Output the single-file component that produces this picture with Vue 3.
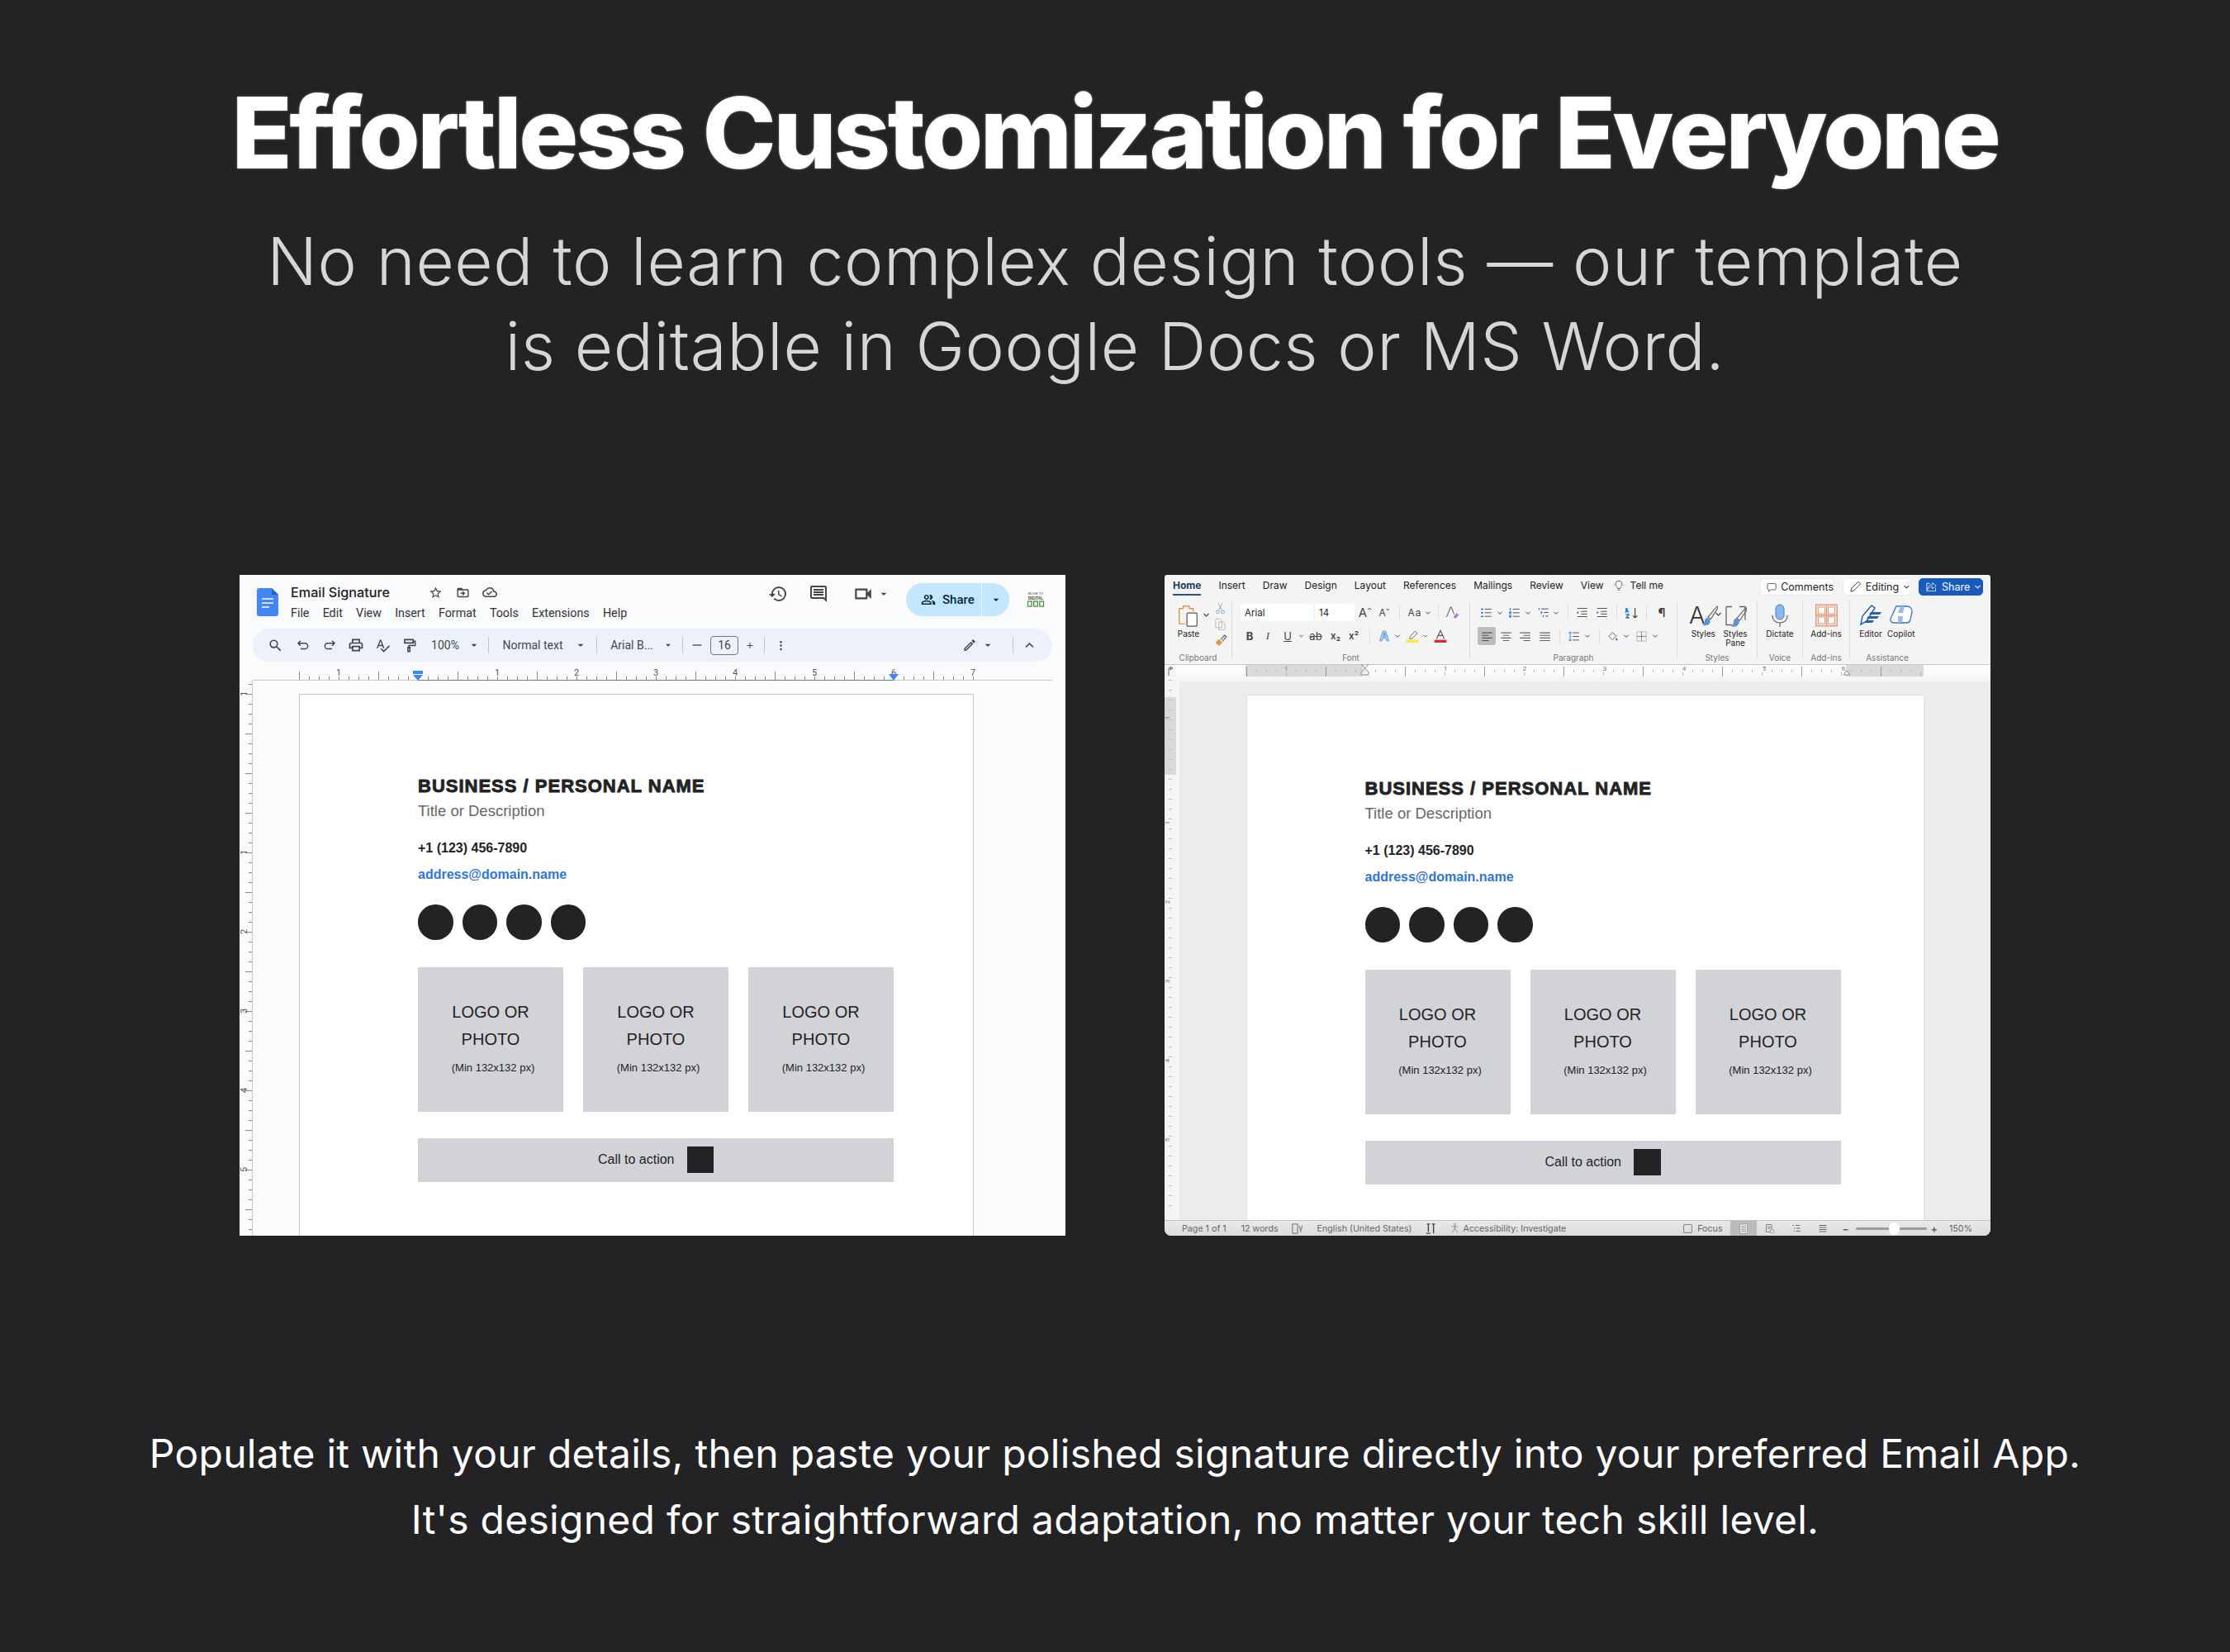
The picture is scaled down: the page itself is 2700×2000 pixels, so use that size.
<template>
  <div class="page">
    <header class="intro">
      <h1>Effortless Customization for Everyone</h1>
      <p>No need to learn complex design tools — our template<br />is editable in Google Docs or MS Word.</p>
    </header>

    <section class="windows">
      <!-- google docs -->
      <div class="docs">
        <div class="d-head">
          <svg class="d-logo" width="26" height="34" viewBox="0 0 26 34">
            <path fill="#4285f4" d="M3 0h15l8 8v23a3 3 0 0 1-3 3H3a3 3 0 0 1-3-3V3a3 3 0 0 1 3-3z" />
            <path fill="#2a5fc4" d="M18 0l8 8h-8z" />
            <path stroke="#fff" stroke-width="1.7" d="M6 13h14M6 18h14M6 23h9" />
          </svg>
          <div class="d-titles">
            <div class="d-name">
              <span class="d-file">Email Signature</span>
              <svg class="d-star" width="17" height="17" viewBox="0 0 24 24" v-html="icons.star"></svg>
              <svg class="d-move" width="17" height="17" viewBox="0 0 24 24" v-html="icons.folder"></svg>
              <svg class="d-cloud" width="18" height="18" viewBox="0 0 24 24" v-html="icons.cloud"></svg>
            </div>
            <nav class="d-menu">
              <span v-for="m in docsMenu" :key="m">{{ m }}</span>
            </nav>
          </div>
          <div class="d-actions">
            <svg class="d-hist" width="24" height="24" viewBox="0 0 24 24" v-html="icons.history"></svg>
            <svg class="d-comment" width="24" height="24" viewBox="0 0 24 24" v-html="icons.comment"></svg>
            <svg class="d-cam" width="26" height="26" viewBox="0 0 24 24" v-html="icons.video"></svg>
            <svg class="d-arrow" width="16" height="16" viewBox="0 0 24 24" v-html="icons.drop"></svg>
            <div class="d-share">
              <div class="d-share-main">
                <svg width="18" height="18" viewBox="0 0 24 24" v-html="icons.people"></svg>
                <span>Share</span>
              </div>
              <div class="d-share-more">
                <svg width="16" height="16" viewBox="0 0 24 24" v-html="icons.drop"></svg>
              </div>
            </div>
            <svg class="d-avatar" width="24" height="24" viewBox="0 0 24 24">
              <circle cx="12" cy="12" r="12" fill="#fff" />
              <text x="12" y="6.4" text-anchor="middle" class="av-text">MOVE TO</text>
              <text x="12" y="11.6" text-anchor="middle" class="av-text av-bold">DIGITAL</text>
              <g fill="none" stroke="#4c8f3c" stroke-width="1.3">
                <rect x="2.5" y="14" width="4.6" height="6" />
                <rect x="9.7" y="14" width="4.6" height="6" />
                <rect x="16.9" y="14" width="4.6" height="6" />
              </g>
            </svg>
          </div>
        </div>

        <div class="d-bar">
          <template v-for="(c, i) in docsTools" :key="i">
            <span class="d-cell" :style="{ width: c.w + 'px' }">
              <svg v-if="c.i" :width="c.s" :height="c.s" viewBox="0 0 24 24" v-html="icons[c.i]"></svg>
              <i v-else-if="c.sep" class="d-sep"></i>
              <b v-else-if="c.box" class="d-size">{{ c.box }}</b>
              <template v-else>{{ c.t }}</template>
            </span>
          </template>
        </div>

        <svg class="d-ruler" width="1000" height="23" viewBox="0 0 1000 23">
          <path stroke="#c7c7c7" d="M16 22.5h968" />
          <path stroke="#777" d="M216 22.5h576" />
          <path v-for="x in docsTicks" :key="x" stroke="#888" :d="`M${x + 0.5} 22V${(x - 216 + 960) % 96 === 48 ? 12 : 18}`" />
          <text v-for="n in docsNums" :key="n.x" :x="n.x" y="17" text-anchor="middle" class="r-num">{{ n.t }}</text>
          <rect x="210" y="11" width="12" height="4" fill="#4285f4" />
          <path d="M210 16h12l-6 7z" fill="#4285f4" />
          <path d="M786 15h12l-6 8z" fill="#4285f4" />
        </svg>

        <div class="d-body">
          <svg class="d-vruler" width="16" height="672" viewBox="0 0 16 672">
            <path stroke="#c7c7c7" d="M15.5 0v672" />
            <path v-for="y in vTicks" :key="y" stroke="#888" :d="`M15 ${y + 0.5}H${(y - 16) % 48 === 0 ? 7 : 11}`" />
            <text v-for="n in vNums" :key="n.y" x="0" y="0" text-anchor="middle" class="r-num" :transform="`translate(9 ${n.y}) rotate(-90)`">{{ n.t }}</text>
          </svg>
          <div class="d-canvas">
            <div class="sheet docs-sheet">
              <div class="s-name">BUSINESS / PERSONAL NAME</div>
              <div class="s-title">Title or Description</div>
              <div class="s-phone">+1 (123) 456-7890</div>
              <div class="s-mail">address@domain.name</div>
              <div class="s-dots"><i v-for="n in 4" :key="n"></i></div>
              <div class="s-boxes">
                <div v-for="n in 3" :key="n" class="s-box">
                  <span>LOGO OR</span>
                  <span>PHOTO</span>
                  <small>(Min 132x132 px)</small>
                </div>
              </div>
              <div class="s-cta">Call to action <i></i></div>
            </div>
          </div>
        </div>
      </div>

      <!-- word -->
      <div class="word">
        <div class="w-top">
          <nav class="w-tabs">
            <span v-for="t in wordTabs" :key="t" :class="{ on: t === 'Home' }">{{ t }}</span>
            <svg width="14" height="16" viewBox="0 0 24 24" v-html="icons.bulb"></svg>
            <span>Tell me</span>
          </nav>
          <div class="w-btn w-comments">
            <svg width="16" height="16" viewBox="0 0 24 24" v-html="icons.bubble"></svg>Comments
          </div>
          <div class="w-btn w-editing">
            <svg width="15" height="15" viewBox="0 0 24 24" v-html="icons.wpen"></svg>Editing
            <svg width="9" height="9" viewBox="0 0 24 24" v-html="icons.chev"></svg>
          </div>
          <div class="w-btn w-share">
            <svg width="15" height="15" viewBox="0 0 24 24" v-html="icons.wshare"></svg>Share
            <svg width="9" height="9" viewBox="0 0 24 24" v-html="icons.chevw"></svg>
          </div>
        </div>

        <div class="w-ribbon">
          <div class="rg rg-clip">
            <div class="clip-body">
              <div class="big">
                <svg width="28" height="30" viewBox="0 0 28 30" v-html="icons.paste"></svg>
                <span>Paste</span>
              </div>
              <svg class="clip-chev" width="9" height="9" viewBox="0 0 24 24" v-html="icons.chev"></svg>
              <div class="clip-side">
                <svg width="15" height="15" viewBox="0 0 24 24" v-html="icons.cut"></svg>
                <svg width="15" height="15" viewBox="0 0 24 24" v-html="icons.copy"></svg>
                <svg width="16" height="16" viewBox="0 0 24 24" v-html="icons.brush"></svg>
              </div>
            </div>
            <label>Clipboard</label>
          </div>

          <div v-for="g in textGroups" :key="g.name" class="rg" :class="g.cl">
            <div v-for="(row, r) in g.rows" :key="r" class="rrow">
              <span v-for="(c, i) in row" :key="i" class="rc" :class="c.cl" :style="{ width: c.w + 'px' }">
                <svg v-if="c.i" :width="c.s || 15" :height="c.s || 15" viewBox="0 0 24 24" v-html="icons[c.i]"></svg>
                <i v-else-if="c.sep" class="r-sep"></i>
                <template v-else>{{ c.t }}</template>
              </span>
            </div>
            <label>{{ g.name }}</label>
          </div>

          <div class="rg rg-styles">
            <div class="big-row">
              <div class="big b-styles">
                <div class="styles-a">
                  <span>A</span>
                  <svg width="20" height="26" viewBox="0 0 20 26" v-html="icons.stylebrush"></svg>
                </div>
                <span>Styles</span>
              </div>
              <svg class="st-chev" width="9" height="9" viewBox="0 0 24 24" v-html="icons.chev"></svg>
              <div class="big b-pane">
                <svg width="27" height="27" viewBox="0 0 27 27" v-html="icons.pane"></svg>
                <span>Styles<br />Pane</span>
              </div>
            </div>
            <label>Styles</label>
          </div>
          <div class="rg rg-voice">
            <div class="big">
              <svg width="20" height="28" viewBox="0 0 20 28" v-html="icons.mic"></svg>
              <span>Dictate</span>
            </div>
            <label>Voice</label>
          </div>
          <div class="rg rg-add">
            <div class="big">
              <svg width="27" height="27" viewBox="0 0 27 27" v-html="icons.addins"></svg>
              <span>Add-ins</span>
            </div>
            <label>Add-ins</label>
          </div>
          <div class="rg rg-assist">
            <div class="big-row assist-row">
              <div class="big">
                <svg width="28" height="28" viewBox="0 0 28 28" v-html="icons.editor"></svg>
                <span>Editor</span>
              </div>
              <div class="big">
                <svg width="30" height="28" viewBox="0 0 30 28" v-html="icons.copilot"></svg>
                <span>Copilot</span>
              </div>
            </div>
            <label>Assistance</label>
          </div>
        </div>

        <svg class="w-ruler" width="1000" height="15" viewBox="0 0 1000 15">
          <rect width="1000" height="15" fill="#fbfbfb" />
          <rect width="14" height="15" fill="#f5f5f5" />
          <path d="M5 14V5h3M7 3l3 2-3 2z" fill="none" stroke="#666" />
          <rect x="98" width="142" height="15" fill="#d9d9d9" />
          <rect x="825" width="94" height="15" fill="#d9d9d9" />
          <path stroke="#c9c9c9" d="M0 .5h1000" />
          <path v-for="t in wordTicks" :key="t.x" :stroke="t.tall ? '#999' : '#b5b5b5'" :d="`M${t.x + 0.5} ${t.tall ? 3 : t.inch ? 10 : 7}V${t.tall ? 15 : t.inch ? 14 : 10}`" />
          <text v-for="n in wordNums" :key="n.x" :x="n.x" y="8" text-anchor="middle" class="r-num r-small">{{ n.t }}</text>
          <path d="M238 0h9l-4.5 5 4.5 5v3h-9v-3l4.5-5z" fill="#f5f5f5" stroke="#888" />
          <path d="M822 13l4-5 4 5z" fill="#f5f5f5" stroke="#888" />
        </svg>

        <div class="w-body">
          <svg class="w-vruler" width="18" height="658" viewBox="0 0 18 658">
            <rect y="25" width="14" height="94" fill="#d9d9d9" />
            <path v-for="y in wordVTicks" :key="y" stroke="#bbb" :d="`M5 ${y + 0.5}H9`" />
            <text v-for="n in wordVNums" :key="n.y" class="r-num r-small" text-anchor="middle" :transform="`translate(6 ${n.y}) rotate(-90)`">{{ n.t }}</text>
          </svg>
          <div class="w-canvas">
            <div class="sheet word-sheet">
              <div class="s-name">BUSINESS / PERSONAL NAME</div>
              <div class="s-title">Title or Description</div>
              <div class="s-phone">+1 (123) 456-7890</div>
              <div class="s-mail">address@domain.name</div>
              <div class="s-dots"><i v-for="n in 4" :key="n"></i></div>
              <div class="s-boxes">
                <div v-for="n in 3" :key="n" class="s-box">
                  <span>LOGO OR</span>
                  <span>PHOTO</span>
                  <small>(Min 132x132 px)</small>
                </div>
              </div>
              <div class="s-cta">Call to action <i></i></div>
            </div>
          </div>
        </div>

        <div class="w-status">
          <span class="st-page">Page 1 of 1</span>
          <span class="st-words">12 words</span>
          <svg class="st-proof" width="15" height="15" viewBox="0 0 24 24" v-html="icons.proof"></svg>
          <span class="st-lang">English (United States)</span>
          <svg class="st-track" width="15" height="15" viewBox="0 0 24 24" v-html="icons.track"></svg>
          <svg class="st-acc" width="13" height="14" viewBox="0 0 24 24" v-html="icons.access"></svg>
          <span>Accessibility: Investigate</span>
          <svg class="st-focus" width="13" height="13" viewBox="0 0 24 24" v-html="icons.focus"></svg>
          <span>Focus</span>
          <div class="st-view on"><svg width="12" height="13" viewBox="0 0 24 24" v-html="icons.lines"></svg></div>
          <div class="st-view"><svg width="12" height="13" viewBox="0 0 24 24" v-html="icons.web"></svg></div>
          <div class="st-view"><svg width="12" height="13" viewBox="0 0 24 24" v-html="icons.outline"></svg></div>
          <div class="st-view"><svg width="12" height="13" viewBox="0 0 24 24" v-html="icons.draft"></svg></div>
          <span class="st-minus">−</span>
          <div class="st-slider"><i></i></div>
          <span class="st-plus">+</span>
          <span class="st-zoom">150%</span>
        </div>
      </div>
    </section>

    <footer class="outro">
      <p>Populate it with your details, then paste your polished signature directly into your preferred Email App.</p>
      <p>It's designed for straightforward adaptation, no matter your tech skill level.</p>
    </footer>
  </div>
</template>

<script setup>
const docsMenu = ['File', 'Edit', 'View', 'Insert', 'Format', 'Tools', 'Extensions', 'Help']
const wordTabs = ['Home', 'Insert', 'Draw', 'Design', 'Layout', 'References', 'Mailings', 'Review', 'View']

const line = (d, c = '#555', w = 1.6) => `<path d="${d}" fill="none" stroke="${c}" stroke-width="${w}"/>`

const icons = {
  star: '<path d="M22 9.24l-7.19-.62L12 2 9.19 8.63 2 9.24l5.46 4.73L5.82 21 12 17.27 18.18 21l-1.63-7.03L22 9.24zM12 15.4l-3.76 2.27 1-4.28-3.32-2.88 4.38-.38L12 6.1l1.71 4.04 4.38.38-3.32 2.88 1 4.28L12 15.4z"/>',
  folder: '<path d="M20 6h-8l-2-2H4c-1.11 0-2 .89-2 2v12c0 1.11.89 2 2 2h16c1.11 0 2-.89 2-2V8c0-1.11-.89-2-2-2zm0 12H4V8h16v10zm-8.01-9l-1.41 1.41L12.16 12H8v2h4.16l-1.59 1.59L11.99 17 16 13.01 11.99 9z"/>',
  cloud: '<path d="M19.35 10.04A7.49 7.49 0 0 0 12 4C9.11 4 6.6 5.64 5.35 8.04A5.994 5.994 0 0 0 0 14c0 3.31 2.69 6 6 6h13c2.76 0 5-2.24 5-5 0-2.64-2.05-4.78-4.65-4.96zM19 18H6c-2.21 0-4-1.79-4-4 0-2.05 1.53-3.76 3.56-3.97l1.07-.11.5-.95A5.469 5.469 0 0 1 12 6c2.62 0 4.88 1.86 5.39 4.43l.3 1.5 1.53.11A2.98 2.98 0 0 1 22 15c0 1.65-1.35 3-3 3zm-9-3.82l-2.09-2.09L6.5 13.5 10 17l6.01-6.01-1.41-1.41z"/>',
  history: '<path d="M13 3a9 9 0 0 0-9 9H1l3.89 3.89.07.14L9 12H6c0-3.87 3.13-7 7-7s7 3.13 7 7-3.13 7-7 7c-1.93 0-3.68-.79-4.94-2.06l-1.42 1.42A8.954 8.954 0 0 0 13 21a9 9 0 0 0 0-18zm-1 5v5l4.28 2.54.72-1.21-3.5-2.08V8H12z"/>',
  comment: '<path d="M20 2H4c-1.1 0-2 .9-2 2v12c0 1.1.9 2 2 2h14l4 4V4c0-1.1-.9-2-2-2zm0 15.17L18.83 16H4V4h16v13.17zM6 12h12v2H6zm0-3h12v2H6zm0-3h12v2H6z"/>',
  video: '<path d="M15 8v8H5V8h10m1-2H4c-.55 0-1 .45-1 1v10c0 .55.45 1 1 1h12c.55 0 1-.45 1-1v-3.5l4 4v-11l-4 4V7c0-.55-.45-1-1-1z"/>',
  people: '<path d="M16.67 13.13C18.04 14.06 19 15.32 19 17v3h4v-3c0-2.18-3.57-3.47-6.33-3.87zM15 12c2.21 0 4-1.79 4-4s-1.79-4-4-4c-.47 0-.91.1-1.33.24a5.98 5.98 0 0 1 0 7.52c.42.14.86.24 1.33.24zM9 12c2.21 0 4-1.79 4-4s-1.79-4-4-4-4 1.79-4 4 1.79 4 4 4zm0-6c1.1 0 2 .9 2 2s-.9 2-2 2-2-.9-2-2 .9-2 2-2zM9 13c-2.67 0-8 1.34-8 4v3h16v-3c0-2.66-5.33-4-8-4zm6 5H3v-.99C3.2 16.29 6.3 15 9 15s5.8 1.29 6 2v1z"/>',
  drop: '<path d="M7 10l5 5 5-5z"/>',
  search: '<path d="M15.5 14h-.79l-.28-.27A6.471 6.471 0 0 0 16 9.5 6.5 6.5 0 1 0 9.5 16c1.61 0 3.09-.59 4.23-1.57l.27.28v.79l5 4.99L20.49 19l-4.99-5zm-6 0C7.01 14 5 11.99 5 9.5S7.01 5 9.5 5 14 7.01 14 9.5 11.99 14 9.5 14z"/>',
  undo: line('M8 5 4 9l4 4M4 9h11a4.5 4.5 0 0 1 0 9H8', '#444746', 2),
  redo: line('M16 5l4 4-4 4M20 9H9a4.5 4.5 0 0 0 0 9h7', '#444746', 2),
  print: '<path d="M19 8h-1V3H6v5H5c-1.66 0-3 1.34-3 3v6h4v4h12v-4h4v-6c0-1.66-1.34-3-3-3zM8 5h8v3H8V5zm8 12v2H8v-4h8v2zm2-2v-2H6v2H4v-4c0-.55.45-1 1-1h14c.55 0 1 .45 1 1v4h-2z"/>',
  spell: '<path d="M12.45 16h2.09L9.43 3H7.57L2.46 16h2.09l1.12-3h5.64l1.14 3zm-6.02-5L8.5 5.48 10.57 11H6.43zm15.16.59l-8.09 8.09L9.83 16l-1.41 1.41 5.09 5.09L23 13l-1.41-1.41z"/>',
  roller: line('M5 3h13v5H5zM18 5.5h3V12h-9.5v3M10 15h3v6h-3z', '#444746', 2),
  dots: '<circle cx="12" cy="5" r="2"/><circle cx="12" cy="12" r="2"/><circle cx="12" cy="19" r="2"/>',
  pencil: '<path d="M14.06 9.02l.92.92L5.92 19H5v-.92l9.06-9.06M17.66 3c-.25 0-.51.1-.7.29l-1.83 1.83 3.75 3.75 1.83-1.83a.996.996 0 0 0 0-1.41l-2.34-2.34c-.2-.2-.45-.29-.71-.29zm-3.6 3.19L3 17.25V21h3.75L17.81 9.94l-3.75-3.75z"/>',
  up: line('M5 15l7-7 7 7', '#444746', 2.4),
  minus: '<path d="M4 11h16v2H4z"/>',
  plus: '<path d="M19 13h-6v6h-2v-6H5v-2h6V5h2v6h6v2z"/>',

  // word
  bulb: line('M12 2a7 7 0 0 0-4 12.7c1 .8 1.5 1.8 1.5 3.3h5c0-1.5.5-2.5 1.5-3.3A7 7 0 0 0 12 2zM10 21h4', '#555', 1.5),
  bubble: line('M5 3h14a3 3 0 0 1 3 3v9a3 3 0 0 1-3 3H10l-5 4v-4a3 3 0 0 1-3-3V6a3 3 0 0 1 3-3z', '#333', 1.5),
  wpen: line('M3 21l1.5-6L16 3.5a2.1 2.1 0 0 1 4.5 4.5L9 19.5z', '#333', 1.5),
  wshare: line('M14 4l7 6-7 6v-4c-5 0-8 2-10 6 0-6 3-10 10-10zM20 14v6H3V5h6', '#cfe0fa', 1.5),
  chev: line('M4 8l8 8 8-8', '#444', 3),
  chevw: line('M4 8l8 8 8-8', '#dbe7fb', 3),
  paste: '<path d="M2 6h5V3h8v3h5v4" fill="#fdf6ea" stroke="#d28a2c" stroke-width="1.3"/><path d="M2 6v20h8" fill="none" stroke="#d28a2c" stroke-width="1.3"/><rect x="12" y="12" width="13" height="17" rx="1" fill="#fff" stroke="#555" stroke-width="1.3"/>',
  cut: line('M8 2l7 13M16 2L9 15', '#8aa6c8', 1.5) + '<circle cx="7" cy="19" r="3" fill="none" stroke="#8aa6c8" stroke-width="1.5"/><circle cx="17" cy="19" r="3" fill="none" stroke="#8aa6c8" stroke-width="1.5"/>',
  copy: line('M3 2h9l3 3v14H3zM9 8h8l4 4v11H9z', '#b4b4b4', 1.4),
  brush: '<path d="M2 16l7-6 6 6-6 7z" fill="#e0994a"/><path d="M12 11l7-8 3 3-7 8" fill="none" stroke="#666" stroke-width="1.8"/>',
  clear: line('M2 20 9 3h1l5 12', '#666', 1.5) + '<path d="M14 19l5-6 4 3-5 6h-3z" fill="#b07ad0"/>',
  bullets: '<g fill="#2b7cd3"><rect x="2" y="4" width="4" height="3"/><rect x="2" y="11" width="4" height="3"/><rect x="2" y="18" width="4" height="3"/></g>' + line('M9 5.5h13M9 12.5h13M9 19.5h13'),
  numbers: '<g fill="#2b7cd3"><rect x="3" y="3" width="2" height="5"/><rect x="2" y="10" width="4" height="5"/><rect x="2" y="17" width="4" height="5"/></g>' + line('M9 5.5h13M9 12.5h13M9 19.5h13'),
  multi: '<g fill="#2b7cd3"><rect x="3" y="3" width="2" height="4"/><rect x="7" y="10" width="3" height="4"/><rect x="11" y="17" width="2" height="4"/></g>' + line('M8 5h14M13 12h9M16 19h6'),
  indl: '<path d="M1 12l4-3v6z" fill="#2b7cd3"/>' + line('M3 4h19M10 10h12M10 15h12M3 20h19'),
  indr: '<path d="M6 12l-4-3v6z" fill="#2b7cd3"/>' + line('M3 4h19M10 10h12M10 15h12M3 20h19'),
  sort: line('M19 3v18M15 17l4 4 4-4', '#444', 1.8) + '<path d="M2 3h3l3 9H6l-.5-2h-2L3 12H1zM2 14h7v2l-4 4h4v2H2v-2l4-4H2z" fill="#2b7cd3"/>',
  alignl: line('M2 5h20M2 10h13M2 15h20M2 20h13', '#555', 1.7),
  alignc: line('M2 5h20M6 10h12M2 15h20M6 20h12', '#666', 1.7),
  alignr: line('M2 5h20M9 10h13M2 15h20M9 20h13', '#666', 1.7),
  alignj: line('M2 5h20M2 10h20M2 15h20M2 20h20', '#666', 1.7),
  spacing: line('M10 5h12M10 12h12M10 19h12') + line('M5 3v18M2 6l3-3 3 3M2 18l3 3 3-3', '#2b7cd3', 1.5),
  shade: line('M10 4l-7 8 7 7 7-8z', '#666', 1.5) + '<path d="M18 14l2 4a2 2 0 1 1-4 0z" fill="#2b7cd3"/>',
  borders: line('M3 3h18v18H3z', '#aaa', 1.2) + line('M12 3v18M3 12h18', '#666', 1.2),
  hl: '<rect x="1" y="19" width="22" height="5" fill="#fce93a"/>' + line('M7 17l1-4L17 3l4 4-10 10z', '#666', 1.4),
  color: '<rect x="1" y="19" width="22" height="5" fill="#dd2e1e"/>' + line('M5 17L12 2l7 15M8 11h8', '#555', 1.7),
  stylebrush: '<path d="M19 1L8 14l3 3L20 3z" fill="none" stroke="#555" stroke-width="1.1"/><path d="M1 24c4 1 9 0 10-5l-3-4c-3 0-4 2-4 4 0 2-1 4-3 5z" fill="#5b93d6"/>',
  pane: '<path d="M2 3h7M18 3h7v16M2 3v22h7" fill="none" stroke="#666" stroke-width="1.3"/><path d="M26 4L15 17l3 3L27 7z" fill="none" stroke="#555" stroke-width="1.1"/><path d="M8 27c4 1 9 0 10-6l-3-4c-3 0-4 2-4 4 0 2-1 4-3 6z" fill="#5b93d6"/>',
  mic: '<rect x="5" y="1" width="10" height="18" rx="5" fill="#8ab8ea" stroke="#3f7fca"/><path d="M1 14c0 6 4 9 9 9s9-3 9-9M10 23v5" fill="none" stroke="#666" stroke-width="1.2"/>',
  addins: '<rect x=".7" y=".7" width="25.6" height="25.6" fill="#f9e6dd" stroke="#e29a7c" stroke-width="1.4"/><path d="M13.5 1v25M1 13.5h25" stroke="#e29a7c" stroke-width="1.4"/><g fill="#fff" stroke="#e29a7c"><rect x="3.5" y="3.5" width="8" height="8"/><rect x="15.5" y="3.5" width="8" height="8"/><rect x="3.5" y="15.5" width="8" height="8"/><rect x="15.5" y="15.5" width="8" height="8"/></g>',
  editor: '<path d="M2 25l2-10L15 2l4 3-10 16z" fill="#fff" stroke="#2b5fb8" stroke-width="1.5"/><path d="M14 10h13l-2 3H12zM11 15h13l-2 3H9zM9 20h9l-2 3H7z" fill="#2b5fb8"/>',
  copilot: '<path d="M9 3h11l-3 20H5a4 4 0 0 1-3-5z" fill="#fff" stroke="#3f72c2" stroke-width="1.3"/><path d="M18 3h4a6 6 0 0 1 6 7l-2 9a5 5 0 0 1-5 4H13" fill="#fff" stroke="#3f72c2" stroke-width="1.3"/><path d="M14 3h5l-2 8-6 0zM11 15h6l-1 8h-5z" fill="#9cb9e4"/>',
  proof: line('M3 3h10v18H3zM16 6l3 9 3-9M19 15v4', '#666', 1.5),
  track: line('M4 3h6M7 3v15M14 3h6M17 3v18M3 21h8', '#444', 2.2),
  access: line('M12 5v7l-6 10M12 12l6 10M5 8h14', '#777', 1.5) + '<circle cx="12" cy="3" r="2" fill="none" stroke="#777"/>',
  focus: line('M3 3h18v18H3z', '#777', 1.7),
  lines: '<rect x="3" y="1" width="18" height="22" fill="#eee" stroke="#777"/>' + line('M6 6h12M6 10h12M6 14h12M6 18h12', '#777', 1.3),
  web: line('M3 2h13v18H3zM6 7h7M6 11h7', '#666', 1.5) + '<circle cx="17" cy="18" r="5" fill="#ddd" stroke="#666"/>',
  outline: line('M3 4h3M10 4h11M6 11h3M12 11h9M6 18h3M12 18h9', '#666', 1.9),
  draft: line('M3 4h18M3 9h18M3 14h18M3 19h18', '#666', 1.9)
}

const arrow = w => ({ i: 'drop', s: 16, w })
const sep = w => ({ sep: true, w })

const docsTools = [
  { t: '', w: 10 },
  { i: 'search', s: 19, w: 34 },
  { i: 'undo', s: 18, w: 34 },
  { i: 'redo', s: 18, w: 30 },
  { i: 'print', s: 20, w: 34 },
  { i: 'spell', s: 19, w: 30 },
  { i: 'roller', s: 19, w: 34 },
  { t: '100%', w: 54 },
  arrow(16),
  sep(18),
  { t: 'Normal text', w: 90 },
  arrow(26),
  sep(12),
  { t: 'Arial B...', w: 74 },
  arrow(14),
  sep(20),
  { i: 'minus', s: 16, w: 16 },
  { box: '16', w: 50 },
  { i: 'plus', s: 17, w: 12 },
  sep(23),
  { i: 'dots', s: 15, w: 16 },
  { t: '', w: 209 },
  { i: 'pencil', s: 18, w: 24 },
  arrow(20),
  { t: '', w: 10 },
  sep(20),
  { i: 'up', s: 15, w: 20 }
]

// ruler marks are spaced by 96px to the inch
const docsTicks = Array.from({ length: 69 }, (_, i) => 72 + i * 12)
const docsNums = [
  { x: 120, t: '1' }, { x: 312, t: '1' }, { x: 408, t: '2' }, { x: 504, t: '3' },
  { x: 600, t: '4' }, { x: 696, t: '5' }, { x: 792, t: '6' }, { x: 888, t: '7' }
]
const vTicks = Array.from({ length: 56 }, (_, i) => 4 + i * 12)
const vNums = [
  { y: 16, t: '1' }, { y: 208, t: '1' }, { y: 304, t: '2' }, { y: 400, t: '3' }, { y: 496, t: '4' }, { y: 592, t: '5' }
]
const wordTicks = Array.from({ length: 69 }, (_, i) => {
  const x = 99 + i * 12
  const off = (x - 243 + 960) % 96
  return { x, tall: off === 48, inch: off === 0 }
})
const wordNums = [
  { x: 147, t: '1' }, { x: 340, t: '1' }, { x: 436, t: '2' }, { x: 533, t: '3' },
  { x: 629, t: '4' }, { x: 726, t: '5' }, { x: 822, t: '6' }
]
const wordVTicks = Array.from({ length: 54 }, (_, i) => 4 + i * 12)
const wordVNums = [
  { y: 50, t: '1' }, { y: 177, t: '1' }, { y: 273, t: '2' }, { y: 369, t: '3' }, { y: 465, t: '4' }, { y: 561, t: '5' }
]

const chev = w => ({ i: 'chev', s: 8, w })
const rsep = w => ({ sep: true, w })

const textGroups = [
  {
    name: 'Font',
    cl: 'rg-font',
    rows: [
      [
        { t: 'Arial', w: 88, cl: 'combo' },
        { t: '14', w: 48, cl: 'combo combo-s' },
        { t: 'Aˆ', w: 26, cl: 'grow' },
        { t: 'Aˇ', w: 20, cl: 'shrink' },
        rsep(16),
        { t: 'Aa', w: 22, cl: 'case' },
        chev(10),
        rsep(14),
        { i: 'clear', s: 17, w: 20 }
      ],
      [
        { t: 'B', w: 22, cl: 'bold' },
        { t: 'I', w: 22, cl: 'ital' },
        { t: 'U', w: 26, cl: 'under' },
        chev(7),
        { t: 'ab', w: 28, cl: 'strike' },
        { t: 'x₂', w: 20, cl: 'sub' },
        { t: 'x²', w: 24, cl: 'sub' },
        rsep(14),
        { t: 'A', w: 22, cl: 'outlined' },
        chev(10),
        { i: 'hl', s: 16, w: 26 },
        chev(6),
        { i: 'color', s: 16, w: 30 },
        chev(2)
      ]
    ]
  },
  {
    name: 'Paragraph',
    cl: 'rg-para',
    rows: [
      [
        { i: 'bullets', s: 15, w: 20 },
        chev(14),
        { i: 'numbers', s: 15, w: 20 },
        chev(14),
        { i: 'multi', s: 15, w: 22 },
        chev(10),
        rsep(18),
        { i: 'indl', s: 15, w: 16 },
        { i: 'indr', s: 15, w: 32 },
        rsep(4),
        { i: 'sort', s: 16, w: 32 },
        rsep(4),
        { t: '¶', w: 34, cl: 'pilcrow' }
      ],
      [
        { i: 'alignl', s: 15, w: 22, cl: 'picked' },
        { i: 'alignc', s: 15, w: 24 },
        { i: 'alignr', s: 15, w: 22 },
        { i: 'alignj', s: 15, w: 26 },
        rsep(10),
        { i: 'spacing', s: 15, w: 24 },
        chev(10),
        rsep(18),
        { i: 'shade', s: 15, w: 16 },
        chev(16),
        { i: 'borders', s: 15, w: 20 },
        chev(14)
      ]
    ]
  }
]
</script>

<style>
html,
body {
  margin: 0;
  background: #232326;
}
</style>

<style scoped>
.page {
  width: 2700px;
  min-height: 2000px;
  background: #232326;
  font-family: Inter, "Liberation Sans", sans-serif;
  overflow: hidden;
}

.intro {
  padding-top: 89px;
  text-align: center;
}

h1 {
  margin: 0;
  font-size: 120px;
  line-height: 144px;
  font-weight: 800;
  letter-spacing: -3.4px;
  color: #fff;
  text-shadow: 0 0 3px rgba(255, 255, 255, 0.35);
}

.intro p {
  margin: 31px 0 0;
  font-size: 80px;
  line-height: 103px;
  font-weight: 300;
  letter-spacing: 0.6px;
  color: #d6d6d8;
}

.windows {
  display: flex;
  justify-content: center;
  gap: 120px;
  margin-top: 226px;
}

.outro {
  margin-top: 224px;
  text-align: center;
  color: #fff;
  font-size: 48px;
  line-height: 80px;
  letter-spacing: 0.26px;
}

.outro p {
  margin: 0;
}

/* shared sheet content */
.sheet {
  background: #fff;
  font-family: "Liberation Sans", Arial, sans-serif;
  color: #232326;
  box-sizing: border-box;
  height: 100%;
}

.s-name {
  font-size: 22px;
  line-height: 26px;
  font-weight: 700;
  letter-spacing: 1px;
  -webkit-text-stroke: 0.9px #232326;
}

.s-title {
  margin-top: 5px;
  font-size: 18.5px;
  line-height: 24px;
  color: #666;
}

.s-phone,
.s-mail {
  font-size: 16px;
  line-height: 20px;
  font-weight: 700;
}

.s-phone {
  margin-top: 23px;
}

.s-mail {
  margin-top: 12px;
  color: #2f75d6;
}

.s-dots {
  display: flex;
  gap: 11px;
  margin-top: 26px;
}

.s-dots i {
  width: 42.5px;
  height: 42.5px;
  border-radius: 50%;
  background: #232326;
}

.s-boxes {
  display: flex;
  gap: 24px;
  margin-top: 33px;
}

.s-box {
  width: 176px;
  height: 175px;
  padding-top: 38px;
  box-sizing: border-box;
  background: #d2d3d7;
  display: flex;
  flex-direction: column;
  align-items: center;
  font-size: 20px;
  line-height: 33px;
}

.s-box small {
  margin-top: 9px;
  padding-left: 6px;
  font-size: 13px;
  line-height: 18px;
}

.s-cta {
  width: 576px;
  height: 53px;
  margin-top: 32px;
  background: #d2d3d7;
  display: flex;
  align-items: center;
  justify-content: center;
  gap: 15px;
  font-size: 16px;
  box-sizing: border-box;
}

.s-cta i {
  width: 32.5px;
  height: 32.5px;
  background: #232326;
}

/* google docs */
.docs {
  width: 1000px;
  height: 800px;
  background: #f9fbfd;
  display: flex;
  flex-direction: column;
  overflow: hidden;
  font-family: Roboto, Inter, sans-serif;
  color: #1f1f1f;
}

.d-head {
  height: 64px;
  padding-left: 21px;
  display: flex;
  flex: none;
  box-sizing: border-box;
}

.d-logo {
  margin-top: 16px;
}

.d-titles {
  margin-left: 15px;
}

.d-name {
  display: flex;
  align-items: center;
  height: 22px;
  margin-top: 10px;
  fill: #444746;
}

.d-file {
  font-family: Inter, sans-serif;
  font-size: 16.2px;
  font-weight: 500;
  width: 167px;
}

.d-move {
  margin-left: 16px;
}

.d-cloud {
  margin-left: 15px;
}

.d-menu {
  display: flex;
  gap: 16.2px;
  margin-top: 5px;
  font-size: 14.3px;
  line-height: 18px;
  color: #333;
}

.d-actions {
  margin-left: auto;
  display: flex;
  align-items: flex-start;
  fill: #444746;
  padding-right: 24px;
}

.d-hist {
  margin-top: 11px;
}

.d-comment {
  margin: 11px 0 0 25px;
}

.d-cam {
  margin: 10px 0 0 29px;
}

.d-arrow {
  margin: 15px 0 0 4px;
}

.d-share {
  display: flex;
  margin: 10px 0 0 19px;
  height: 40px;
  color: #0b2545;
  fill: #0b2545;
  font-size: 15px;
  font-weight: 500;
}

.d-share-main {
  width: 91px;
  padding-left: 18px;
  box-sizing: border-box;
  background: #c2e7ff;
  border-radius: 20px 0 0 20px;
  display: flex;
  align-items: center;
  gap: 8px;
  margin-right: 1px;
}

.d-share-more {
  width: 33px;
  background: #c2e7ff;
  border-radius: 0 20px 20px 0;
  display: flex;
  align-items: center;
  justify-content: center;
}

.d-avatar {
  margin: 18px 0 0 20px;
}

.av-text {
  font-family: "Liberation Sans", sans-serif;
  font-size: 4px;
  fill: #333;
}

.av-bold {
  font-size: 4.6px;
  font-weight: 700;
}

.d-bar {
  flex: none;
  height: 40px;
  margin: 1px 16px 0;
  border-radius: 20px;
  background: #edf2fa;
  display: flex;
  align-items: center;
  font-size: 14px;
  color: #444746;
  fill: #444746;
}

.d-cell {
  flex: none;
  display: flex;
  align-items: center;
  justify-content: center;
  white-space: nowrap;
}

.d-sep {
  width: 1px;
  height: 20px;
  background: #c7c7c7;
}

.d-size {
  width: 32px;
  height: 21px;
  border: 1px solid #747775;
  border-radius: 4px;
  display: flex;
  align-items: center;
  justify-content: center;
  font-weight: 400;
}

.d-ruler {
  flex: none;
  display: block;
}

.r-num {
  font-family: Roboto, sans-serif;
  font-size: 11px;
  fill: #555;
}

.r-small {
  font-size: 8px;
  fill: #777;
}

.d-body {
  flex: 1;
  display: flex;
  min-height: 0;
}

.d-vruler {
  flex: none;
}

.d-canvas {
  flex: 1;
  padding: 16px 0 0 56px;
}

.docs-sheet {
  width: 817px;
  padding: 98px 0 0 143px;
  border: 1px solid #c7c7c7;
  border-bottom: 0;
}

/* word */
.word {
  width: 1000px;
  height: 800px;
  background: #f4f4f4;
  border-radius: 3px 3px 8px 8px;
  display: flex;
  flex-direction: column;
  overflow: hidden;
  color: #222;
  font-family: Inter, sans-serif;
}

.w-top {
  flex: none;
  height: 26px;
  padding: 4px 9px 0 10px;
  display: flex;
  box-sizing: border-box;
}

.w-tabs {
  display: flex;
  align-items: flex-start;
  gap: 21px;
  font-size: 12px;
  line-height: 16px;
  margin-right: auto;
  padding-top: 1px;
}

.w-tabs svg {
  margin: 0 -14px 0 -10px;
}

.w-tabs .on {
  font-weight: 700;
  color: #1f3864;
  padding-bottom: 2px;
  border-bottom: 2px solid #2b4f8f;
}

.w-btn {
  height: 21px;
  display: flex;
  align-items: center;
  gap: 5px;
  padding-left: 7px;
  box-sizing: border-box;
  font-size: 12.5px;
  background: #fff;
  border-radius: 5px;
  border: 1px solid #ebebeb;
}

.w-comments {
  width: 90px;
  margin-right: 10px;
}

.w-editing {
  width: 83px;
  margin-right: 9px;
}

.w-share {
  width: 78px;
  background: #185abd;
  border-color: #185abd;
  color: #fff;
}

.w-ribbon {
  flex: none;
  height: 82px;
  display: flex;
  box-sizing: border-box;
  padding-top: 5px;
  padding-bottom: 7px;
  font-size: 11px;
}

.rg {
  position: relative;
  box-sizing: border-box;
  padding-top: 4px;
  border-right: 1px solid #dcdcdc;
  flex: none;
}

.rg > label {
  position: absolute;
  left: 0;
  right: 0;
  top: 63px;
  text-align: center;
  font-size: 10px;
  line-height: 12px;
  color: #777;
}

.rg-clip {
  width: 82px;
}

.rg-font {
  width: 288px;
  padding-left: 10px;
}

.rg-para {
  width: 251px;
  padding-left: 9px;
}

.rg-styles {
  width: 97px;
}

.rg-voice {
  width: 55px;
}

.rg-add {
  width: 57px;
}

.rg-assist {
  width: 90px;
  border-right: 0;
}

.rrow {
  display: flex;
  align-items: center;
  height: 21px;
}

.rrow + .rrow {
  margin-top: 7px;
  height: 22px;
}

.rc {
  flex: none;
  height: 100%;
  display: flex;
  align-items: center;
  justify-content: center;
  font-size: 13px;
  color: #444;
}

.r-sep {
  width: 1px;
  height: 17px;
  background: #dcdcdc;
}

.combo {
  justify-content: flex-start;
  padding-left: 5px;
  box-sizing: border-box;
  background: #fff;
  border-radius: 3px;
  font-size: 11.5px;
  color: #222;
  margin-right: 2px;
}

.combo-s {
  margin-right: 0;
}

.grow {
  font-size: 15px;
}

.shrink {
  font-size: 12px;
}

.case {
  letter-spacing: 1px;
  font-size: 12px;
}

.bold {
  font-weight: 700;
}

.ital {
  font-style: italic;
  font-family: "Liberation Serif", serif;
}

.under {
  text-decoration: underline;
}

.strike {
  text-decoration: line-through;
}

.sub {
  font-weight: 600;
  font-size: 11.5px;
}

.outlined {
  font-size: 16px;
  font-weight: 700;
  color: #bcd8f5;
  -webkit-text-stroke: 0.7px #2b7cd3;
}

.pilcrow {
  font-size: 15px;
  font-weight: 600;
}

.picked {
  background: #bdbdbd;
  border-radius: 2px;
}

.big {
  display: flex;
  flex-direction: column;
  align-items: center;
  font-size: 10px;
  line-height: 11px;
  text-align: center;
  color: #222;
}

.big > svg {
  height: 28px;
  flex: none;
}

.big > span {
  margin-top: 3px;
}

.clip-body {
  display: flex;
  padding-left: 15px;
}

.clip-chev {
  margin: 9px 0 0 3px;
}

.clip-side {
  display: flex;
  flex-direction: column;
  gap: 4px;
  margin-left: 5px;
  margin-top: -2px;
}

.big-row {
  display: flex;
  padding-left: 14px;
}

.styles-a {
  display: flex;
  align-items: flex-end;
  height: 28px;
  font-size: 29px;
  line-height: 28px;
  font-weight: 300;
  color: #333;
}

.styles-a svg {
  margin-left: -5px;
}

.st-chev {
  margin: 8px 0 0 -4px;
}

.b-pane {
  margin-left: 2px;
}

.rg-voice .big,
.rg-add .big {
  width: 100%;
}

.assist-row {
  gap: 6px;
  padding-left: 11px;
}

.w-ruler {
  flex: none;
  display: block;
}

.w-body {
  flex: 1;
  min-height: 0;
  display: flex;
  background: #f5f5f5;
}

.w-vruler {
  flex: none;
}

.w-canvas {
  flex: 1;
  margin-top: 6px;
  padding: 17px 0 0 82px;
  background: #ececec;
}

.word-sheet {
  width: 819px;
  padding: 100px 0 0 142.5px;
  box-shadow: 0 0 2px rgba(0, 0, 0, 0.15);
}

.w-status {
  flex: none;
  height: 19px;
  padding-left: 21px;
  background: linear-gradient(#e9e9e9, #dcdcdc);
  border-top: 1px solid #c4c4c4;
  box-sizing: border-box;
  display: flex;
  align-items: center;
  font-size: 10.7px;
  color: #666;
  white-space: nowrap;
}

.st-words {
  margin-left: 18px;
}

.st-proof {
  margin-left: 15px;
}

.st-lang {
  margin-left: 17px;
}

.st-track {
  margin-left: 15px;
}

.st-acc {
  margin: 0 4px 0 15px;
}

.st-focus {
  margin: 0 5px 0 auto;
}

.st-view {
  width: 32px;
  height: 19px;
  display: flex;
  align-items: center;
  justify-content: center;
}

.st-view.on {
  margin-left: 9px;
  background: #bcbcbc;
}

.st-minus {
  margin-left: 8px;
  font-size: 12px;
  font-weight: 700;
}

.st-slider {
  position: relative;
  width: 86px;
  height: 3px;
  margin-left: 8px;
  background: #9c9c9c;
  border-radius: 2px;
}

.st-slider i {
  position: absolute;
  left: 40px;
  top: -6px;
  width: 13px;
  height: 15px;
  border-radius: 6px;
  background: #fff;
}

.st-plus {
  margin-left: 5px;
  font-size: 12px;
  font-weight: 700;
}

.st-zoom {
  margin: 0 22px 0 14px;
}
</style>
